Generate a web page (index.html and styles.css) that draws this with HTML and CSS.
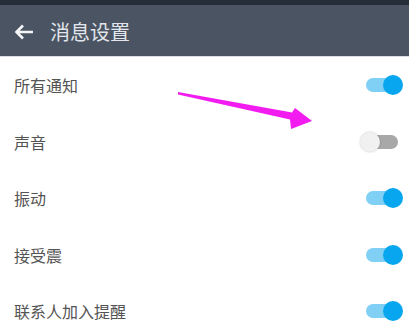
FILE: index.html
```html
<!DOCTYPE html>
<html lang="zh">
<head>
<meta charset="utf-8">
<link rel="stylesheet" href="styles.css">
</head>
<body>
<div class="screen">
  <div class="statusbar"></div>
  <header class="appbar">
    <svg class="back" width="20" height="16" viewBox="0 0 20 16"><path d="M19 8H3M9 1.5L2.5 8L9 14.5" fill="none" stroke="#f4f6f8" stroke-width="2.6"/></svg>
    <span class="title">消息设置</span>
  </header>
  <ul class="list">
    <li class="row"><span class="label">所有通知</span><span class="toggle on"><span class="track"></span><span class="knob"></span></span></li>
    <li class="row"><span class="label">声音</span><span class="toggle off"><span class="track"></span><span class="knob"></span></span></li>
    <li class="row"><span class="label">振动</span><span class="toggle on"><span class="track"></span><span class="knob"></span></span></li>
    <li class="row"><span class="label">接受震</span><span class="toggle on"><span class="track"></span><span class="knob"></span></span></li>
    <li class="row"><span class="label">联系人加入提醒</span><span class="toggle on"><span class="track"></span><span class="knob"></span></span></li>
  </ul>
  <svg class="pointer" width="409" height="329" viewBox="0 0 409 329"><polygon points="178,92 292,112.5 295,108 312,121 291,129 290,119.5 178,94.5" fill="#f21bf0"/></svg>
</div>
</body>
</html>
```

FILE: styles.css
```css
* { box-sizing: border-box; }
html, body { margin: 0; padding: 0; background: #fff; }
body { font-family: "Noto Sans CJK SC", "Noto Sans", sans-serif; }
.screen { position: relative; width: 409px; height: 329px; overflow: hidden; background: #fff; }
.statusbar { height: 5px; background: #252d38; }
.appbar {
  height: 52px;
  background: #4a5462;
  border-bottom: 1px solid #d9dee6;
  display: flex;
  align-items: center;
  padding: 3px 0 0 14px;
  gap: 16px;
}
.back { display: block; }
.title { color: #e2e6ec; font-size: 20px; line-height: 1; }
.list { list-style: none; margin: 0; padding: 0; }
.row {
  height: 56.5px;
  display: flex;
  align-items: center;
  justify-content: space-between;
  padding: 0 6px 0 14px;
}
.label { color: #545454; font-size: 16px; line-height: 1; }
.toggle { position: relative; width: 43px; height: 20px; display: block; }
.track { position: absolute; left: 6px; top: 3px; width: 32px; height: 14px; border-radius: 7px; }
.knob { position: absolute; top: 0; width: 20px; height: 20px; border-radius: 50%; }
.on .track { background: #80cff5; }
.on .knob { right: 0; background: #07a6ef; }
.off .track { background: #a8a8a8; }
.off .knob { left: 0; background: #f1f1f1; box-shadow: 0 0 2px rgba(0,0,0,0.25); }
.pointer { position: absolute; left: 0; top: 0; pointer-events: none; }
```
